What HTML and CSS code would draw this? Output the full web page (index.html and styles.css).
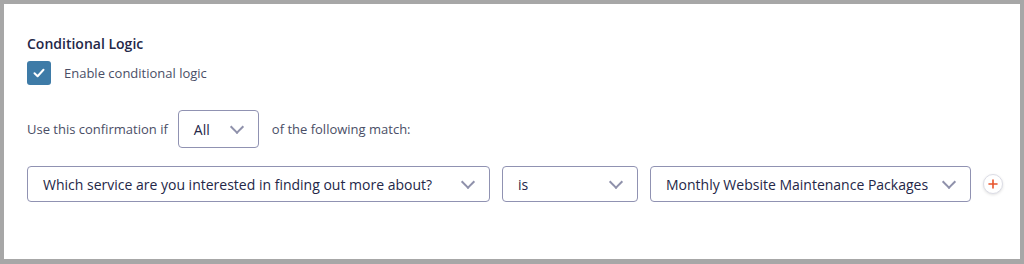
FILE: index.html
```html
<!DOCTYPE html>
<html lang="en">

<head>
    <meta charset="UTF-8">
    <meta name="viewport" content="width=device-width, initial-scale=1.0">
    <title>Conditional Logic</title>
    <link rel="stylesheet" href="styles.css">
</head>

<body>
    <div class="panel">
        <h3 class="title">Conditional Logic</h3>
        <label class="check-row">
            <span class="checkbox">
                <svg width="14" height="14" viewBox="0 0 14 14"><path d="M2.5 7.3 L5.6 10.2 L11.5 3.8" fill="none" stroke="#fff" stroke-width="2" stroke-linecap="round" stroke-linejoin="round"/></svg>
            </span>
            Enable conditional logic
        </label>

        <div class="match-row">
            <span>Use this confirmation if</span>
            <div class="select select-all">All</div>
            <span>of the following match:</span>
        </div>

        <div class="rule-row">
            <div class="select select-field">Which service are you interested in finding out more about?</div>
            <div class="select select-op">is</div>
            <div class="select select-value">Monthly Website Maintenance Packages</div>
            <button class="add-btn" title="Add rule">
                <svg width="10" height="10" viewBox="0 0 10 10"><path d="M5 1 V9 M1 5 H9" stroke="#e8542c" stroke-width="1.6" stroke-linecap="round"/></svg>
            </button>
        </div>
    </div>
</body>

</html>
```

FILE: styles.css
```css
html,
body {
    margin: 0;
    height: 100%;
}

body {
    font-family: "Open Sans", "Noto Sans", sans-serif;
    font-size: 13px;
    color: #4a4e66;
    background: #fff;
    box-sizing: border-box;
    border: 4px solid #a7a7a7;
    border-bottom-width: 5px;
}

.panel {
    padding: 30px 10px 0 23px;
}

.title {
    margin: 0 0 8px;
    font-size: 14px;
    font-weight: 600;
    color: #242748;
}

.check-row {
    display: flex;
    align-items: center;
    gap: 13px;
}

.checkbox {
    width: 24px;
    height: 24px;
    border-radius: 3px;
    background: #3e7ba7;
    display: flex;
    align-items: center;
    justify-content: center;
}

.match-row {
    display: flex;
    align-items: center;
    margin-top: 25px;
}

.rule-row {
    display: flex;
    align-items: center;
    gap: 12px;
    margin-top: 18px;
}

.select {
    box-sizing: border-box;
    flex-shrink: 0;
    white-space: nowrap;
    height: 36px;
    border: 1px solid #9092b2;
    border-radius: 4px;
    padding: 0 40px 0 15px;
    display: flex;
    align-items: center;
    font-size: 14px;
    color: #242748;
    position: relative;
    background: #fff;
}

.select::after {
    content: "";
    position: absolute;
    right: 16px;
    top: 10px;
    width: 8px;
    height: 8px;
    border-right: 2px solid #8f91ab;
    border-bottom: 2px solid #8f91ab;
    transform: rotate(45deg);
}

.select-all {
    width: 81px;
    height: 38px;
    margin: 0 13px 0 10px;
}

.select-all::after {
    top: 11px;
}

.select-field {
    width: 463px;
}

.select-op {
    width: 136px;
}

.select-value {
    width: 321px;
}

.add-btn {
    flex-shrink: 0;
    width: 20px;
    height: 20px;
    padding: 0;
    border-radius: 50%;
    border: 1px solid #dcdde6;
    background: #fff;
    box-shadow: 0 1px 3px rgba(0, 0, 0, 0.12);
    display: flex;
    align-items: center;
    justify-content: center;
}
```
